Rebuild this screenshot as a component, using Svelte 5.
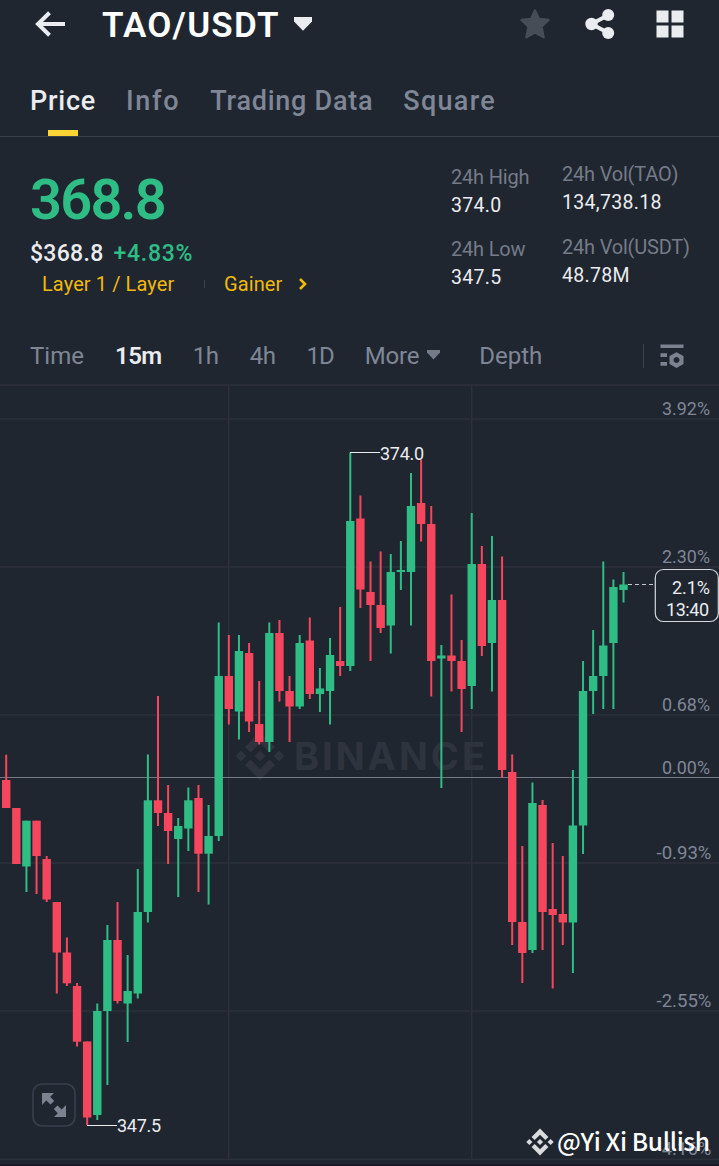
<script>
  const tabs = ['Price', 'Info', 'Trading Data', 'Square'];
  let activeTab = $state('Price');

  const intervals = ['Time', '15m', '1h', '4h', '1D'];
  let activeInterval = $state('15m');

  const top = 384;
  const step = 10.12;
  const rows = [419, 567, 715, 863, 1011, 1159.5];
  const cols = [228.7, 471.7];

  const labels = [
    { y: 415, text: '3.92%', x: 662, w: 48 },
    { y: 563, text: '2.30%', x: 662, w: 48 },
    { y: 711, text: '0.68%', x: 662, w: 48 },
    { y: 774, text: '0.00%', x: 662, w: 48 },
    { y: 859, text: '-0.93%', x: 656.5, w: 55 },
    { y: 1007, text: '-2.55%', x: 656.5, w: 55 },
    { y: 1155, text: '-4.16%', x: 656.5, w: 55 },
  ];

  // [up, high, body top, body bottom, low]
  const candles = [
    [0, 754.7, 780, 808, 808],
    [0, 808, 808, 864, 864],
    [1, 820.7, 820.7, 866.5, 892],
    [0, 820.7, 820.7, 856, 894],
    [0, 856, 859, 899.5, 902],
    [0, 902, 902, 952.5, 993.5],
    [0, 937.5, 952.5, 983.3, 986],
    [0, 983, 986, 1041.7, 1046.5],
    [0, 1041.5, 1041.5, 1117.5, 1125],
    [1, 1003.5, 1011, 1115, 1120],
    [1, 925, 940, 1011, 1085],
    [0, 902, 940, 1001, 1003.5],
    [1, 955, 991, 1003.5, 1042],
    [1, 869, 912, 993.5, 998.5],
    [1, 754.5, 800.3, 912, 922.5],
    [0, 696, 800.3, 813, 826],
    [0, 785, 813, 831, 864],
    [1, 818, 826, 839, 897],
    [1, 787.5, 800.3, 828.5, 851],
    [0, 785, 798, 853.7, 892],
    [1, 805, 836, 853.7, 904.5],
    [1, 622.5, 676, 836, 841],
    [0, 635, 676, 709, 724.5],
    [1, 635, 651, 711.5, 739.5],
    [0, 643, 653, 721.5, 732],
    [0, 681, 724, 742, 744.5],
    [1, 622.5, 633, 742, 752],
    [0, 620, 633, 691, 701.5],
    [0, 676, 691, 706.5, 742],
    [1, 635, 643, 706.5, 709],
    [0, 617.5, 640.5, 694, 699],
    [1, 668, 688.5, 694, 712],
    [1, 638, 655, 691, 724.5],
    [0, 607, 661, 666, 676],
    [1, 452.5, 521, 666, 671],
    [0, 495.5, 518.5, 589.5, 608],
    [0, 561.5, 592, 605, 661],
    [0, 551.5, 605, 628, 633],
    [1, 554, 572, 625.5, 653.5],
    [1, 541, 570, 572, 590],
    [1, 473, 506, 572, 625.5],
    [0, 460, 503, 524, 541.5],
    [0, 506, 524, 661, 696.5],
    [1, 645, 655.5, 658.5, 788],
    [0, 594.5, 655.5, 661, 691.5],
    [0, 640, 661, 689, 732],
    [1, 513, 564, 686, 709],
    [0, 546, 564, 646, 656],
    [1, 536, 600, 643, 691.5],
    [0, 556.5, 600, 770, 777.5],
    [0, 754.5, 772, 922, 945],
    [0, 846, 922, 953, 983],
    [1, 782.5, 803, 950, 953],
    [0, 800, 805, 912, 950],
    [0, 843, 909, 915, 988.5],
    [0, 856, 914, 922.5, 945],
    [1, 770, 825.5, 922.5, 973],
    [1, 661, 691, 825.5, 854],
    [1, 630, 676, 691, 714],
    [1, 561.5, 645.5, 676, 709],
    [1, 579.5, 587, 643, 709],
    [1, 572, 584.5, 590, 602.5],
  ].map(([up, high, open, close, low], i) => ({ up, high, open, close, low, x: 6.2 + i * step }));
</script>

{#snippet logo()}
  <path d="M-15 -9 L0 -24 L15 -9 L9.5 -3.5 L0 -13 L-9.5 -3.5Z" />
  <path d="M-15 9 L0 24 L15 9 L9.5 3.5 L0 13 L-9.5 3.5Z" />
  <path d="M0 -5.5 L5.5 0 L0 5.5 L-5.5 0Z M-19 -5.5 L-13.5 0 L-19 5.5 L-24.5 0Z M19 -5.5 L24.5 0 L19 5.5 L13.5 0Z" />
{/snippet}

<div class="app">
  <header>
    <svg class="back" width="32" height="26" viewBox="0 0 32 26">
      <path d="M30 13H3M14.5 1.8L3 13L14.5 24.2" fill="none" stroke="#eaecef" stroke-width="4" />
    </svg>
    <h1>TAO/USDT</h1>
    <svg class="caret" width="18" height="14" viewBox="0 0 18 14">
      <path d="M0 0H18V4.5L9 13.8L0 4.5Z" fill="#eaecef" />
    </svg>
    <div class="actions">
      <svg width="30" height="30" viewBox="0 0 30 30">
        <path d="M15 1.5L19 10L28.5 11L21.5 17.7L23.6 28.2L15 23.4L6.4 28.2L8.5 17.7L1.5 11L11 10Z" fill="#474d57" stroke="#474d57" stroke-width="2.4" stroke-linejoin="round" />
      </svg>
      <svg width="30" height="30" viewBox="0 0 30 30">
        <path d="M23.5 6L6.5 15L23.5 24" fill="none" stroke="#eaecef" stroke-width="4" />
        <circle cx="23.2" cy="6" r="6" fill="#eaecef" />
        <circle cx="6.5" cy="15" r="6.2" fill="#eaecef" />
        <circle cx="23.2" cy="24" r="6" fill="#eaecef" />
      </svg>
      <svg width="28" height="28" viewBox="0 0 28 28">
        <path d="M.5 .5h12v12H.5zM15.5 .5h12v12h-12zM.5 15.5h12v12H.5zM15.5 15.5h12v12h-12z" fill="#eaecef" />
      </svg>
    </div>
  </header>

  <nav class="tabs">
    {#each tabs as tab}
      <button class:active={tab === activeTab} onclick={() => (activeTab = tab)}>{tab}</button>
    {/each}
  </nav>

  <section class="summary">
    <div class="price">
      <div class="last">368.8</div>
      <div class="sub"><span>$368.8</span><span class="change">+4.83%</span></div>
      <div class="tags">
        <span class="layer">Layer 1 / Layer</span>
        <i></i>
        <span class="gainer">Gainer</span>
        <svg width="8" height="12" viewBox="0 0 8 12">
          <path d="M1 1L6 6L1 11" fill="none" stroke="#f0b90b" stroke-width="2.6" />
        </svg>
      </div>
    </div>
    <dl class="range">
      <dt>24h High</dt>
      <dd>374.0</dd>
      <dt>24h Low</dt>
      <dd>347.5</dd>
    </dl>
    <dl class="volume">
      <dt>24h Vol(TAO)</dt>
      <dd>134,738.18</dd>
      <dt>24h Vol(USDT)</dt>
      <dd>48.78M</dd>
    </dl>
  </section>

  <div class="intervals">
    {#each intervals as item}
      <button class:active={item === activeInterval} onclick={() => (activeInterval = item)}>{item}</button>
    {/each}
    <button class="more">
      More
      <svg width="13" height="10" viewBox="0 0 13 10"><path d="M0 0H13V2.5L6.5 9.5L0 2.5Z" fill="#747a87" /></svg>
    </button>
    <button>Depth</button>
    <div class="settings">
      <svg width="24" height="24" viewBox="0 0 24 24">
        <path d="M.5 .5h23V4H.5zM.5 9.3H7V13H.5zM.5 18H7v3.7H.5z" fill="#7c8290" />
        <path fill-rule="evenodd" d="M16.5 8.2L23.5 12V20L16.5 24L9.5 20V12Z M16.5 13a3 3 0 1 0 .01 0Z" fill="#7c8290" />
      </svg>
    </div>
  </div>

  <div class="chart">
    <svg width="719" height="782" viewBox="0 {top} 719 782">
      <g class="grid">
        <path d="M0 385H719" />
        {#each rows as y}
          <path d="M0 {y}H719" />
        {/each}
        {#each cols as x}
          <path d="M{x} 385V1159" />
        {/each}
      </g>
      <path d="M0 1165H719" stroke="#1b1828" stroke-width="2" />

      <g fill="#2e333e">
        <g transform="translate(260 756)">{@render logo()}</g>
        <text class="brand" x="294" y="770" textLength="191" lengthAdjust="spacing">BINANCE</text>
      </g>
      <path d="M0 777.5H719" stroke="#737984" />

      {#each candles as c}
        <g class={c.up ? 'up' : 'down'}>
          <rect x={c.x - 1} y={c.high} width="2" height={c.low - c.high} />
          <rect x={c.x - 4.2} y={c.open} width="8.4" height={c.close - c.open} />
        </g>
      {/each}

      <g class="marks">
        <path d="M350 452.5H380M87 1125.5H117" />
        <text x="380" y="460" textLength="44">374.0</text>
        <text x="117" y="1132" textLength="44">347.5</text>
      </g>

      {#each labels as l}
        <text class="axis" x={l.x} y={l.y} textLength={l.w} lengthAdjust="spacingAndGlyphs">{l.text}</text>
      {/each}

      <path d="M628 584.5H655" stroke="#c5c8ce" stroke-dasharray="4 3" />
      <rect x="655.3" y="569.5" width="63" height="52" rx="8" fill="#202630" stroke="#d6d8dd" stroke-width="1.2" />
      <g class="now">
        <text x="672" y="594" textLength="38">2.1%</text>
        <text x="666" y="616" textLength="43">13:40</text>
      </g>

      <rect x="33" y="1084" width="42" height="42" rx="9" fill="#202630" stroke="#3a404b" stroke-width="1.6" />
      <g fill="#7c8290">
        <path d="M42 1093H54L50.2 1096.8L54.2 1101L50.5 1104.5L46.3 1100.5L42 1105Z" />
        <path d="M66 1117H54L57.8 1113.2L53.8 1109L57.5 1105.5L61.7 1109.5L66 1105Z" />
      </g>

      <g transform="translate(540 1142) scale(.56)" fill="#d9dbdd">{@render logo()}</g>
      <text class="author" x="557" y="1151" textLength="153">@Yi Xi Bullish</text>
    </svg>
  </div>
</div>

<style>
  :global(body) {
    background: #202630;
  }

  .app {
    width: 719px;
    height: 1166px;
    overflow: hidden;
    background: #202630;
    color: #eaecef;
    font-family: Roboto, sans-serif;
  }

  svg {
    display: block;
    flex: none;
  }

  button {
    border: none;
    background: none;
    padding: 0;
    color: #848e9c;
    font: inherit;
    cursor: pointer;
    white-space: nowrap;
  }

  header {
    display: flex;
    align-items: center;
    height: 48px;
    padding: 0 35px;
  }

  h1 {
    margin: 4px 0 0 35px;
    width: 176px;
    color: #fff;
    font-size: 35px;
    font-weight: 600;
    letter-spacing: 1.2px;
    line-height: 48px;
    white-space: nowrap;
  }

  .caret {
    margin-left: 16px;
  }

  .actions {
    display: flex;
    align-items: center;
    gap: 42px;
    margin-left: auto;
  }

  .actions svg:nth-child(2) {
    margin-left: -7px;
    margin-right: -1px;
  }

  .tabs {
    display: flex;
    gap: 30px;
    height: 88px;
    padding-left: 30px;
    border-bottom: 1px solid #3a404b;
  }

  .tabs button {
    position: relative;
    padding-top: 18px;
    font-size: 27px;
    font-weight: 500;
    letter-spacing: 0.75px;
    color: #7f8696;
  }

  .tabs button:nth-child(2) {
    letter-spacing: 1.7px;
  }

  .tabs button:nth-child(4) {
    letter-spacing: 1.3px;
  }

  .tabs .active {
    color: #eaecef;
  }

  .tabs .active::after {
    content: '';
    position: absolute;
    left: 18px;
    bottom: 0;
    width: 30px;
    height: 6px;
    background: #fcd535;
  }

  .summary {
    display: grid;
    grid-template-columns: 421px 111px 1fr;
    height: 191px;
    padding-left: 30px;
  }

  .last {
    margin-top: 33px;
    color: #2ebd85;
    font-size: 56px;
    font-weight: 600;
    line-height: 60px;
    letter-spacing: -1.8px;
  }

  .sub {
    display: flex;
    gap: 10px;
    margin-top: 9px;
    font-size: 23px;
    font-weight: 500;
    line-height: 30px;
    letter-spacing: 0.3px;
  }

  .change {
    color: #2ebd85;
    letter-spacing: 0.7px;
  }

  .tags {
    display: flex;
    align-items: center;
    margin-top: 2px;
    padding-left: 12px;
    color: #f0b90b;
    font-size: 20px;
    line-height: 26px;
    letter-spacing: 0.1px;
  }

  .tags i {
    width: 1px;
    height: 8px;
    margin-right: 19px;
    background: #3d434e;
  }

  .layer {
    width: 162px;
  }

  .gainer {
    width: 75px;
  }

  dl {
    margin: 0;
  }

  .range {
    padding-top: 26px;
  }

  .volume {
    padding-top: 23px;
  }

  dt {
    height: 28px;
    color: #747b89;
    font-size: 20px;
    letter-spacing: -0.2px;
    line-height: 28px;
    white-space: nowrap;
  }

  dd {
    height: 28px;
    margin: 0 0 16px;
    font-size: 19.5px;
    letter-spacing: 0.3px;
    line-height: 30px;
  }

  .volume dd {
    margin-bottom: 17px;
  }

  .intervals {
    display: flex;
    align-items: center;
    height: 56px;
    padding: 0 35px 0 30px;
    gap: 31px;
    font-size: 24px;
  }

  .intervals button {
    color: #7f8696;
  }

  .intervals .active {
    color: #eaecef;
    font-weight: 600;
    letter-spacing: -0.5px;
  }

  .intervals button:nth-child(3),
  .intervals button:nth-child(4) {
    letter-spacing: -0.4px;
  }

  .intervals button:nth-child(5) {
    letter-spacing: -1px;
  }

  .intervals .more {
    display: flex;
    align-items: center;
    gap: 8px;
    margin-right: 8px;
    letter-spacing: -0.2px;
  }

  .more svg {
    margin-top: -3px;
  }

  .settings {
    margin-left: auto;
    padding-left: 16px;
    border-left: 1px solid #3d434e;
  }

  .grid path {
    stroke: #2b303b;
    stroke-width: 1.5;
  }

  .brand {
    font-family: Inter, sans-serif;
    font-size: 38px;
    font-weight: 700;
  }

  .up {
    fill: #2ebd85;
  }

  .down {
    fill: #f6465d;
  }

  .marks text,
  .now text {
    fill: #eaecef;
    font-size: 18px;
  }

  .marks path {
    stroke: #eaecef;
  }

  .axis {
    fill: #7f8696;
    font-size: 18px;
  }

  .author {
    fill: #fff;
    font-family: 'Noto Sans CJK SC', sans-serif;
    font-size: 24.5px;
    font-weight: 500;
  }
</style>
